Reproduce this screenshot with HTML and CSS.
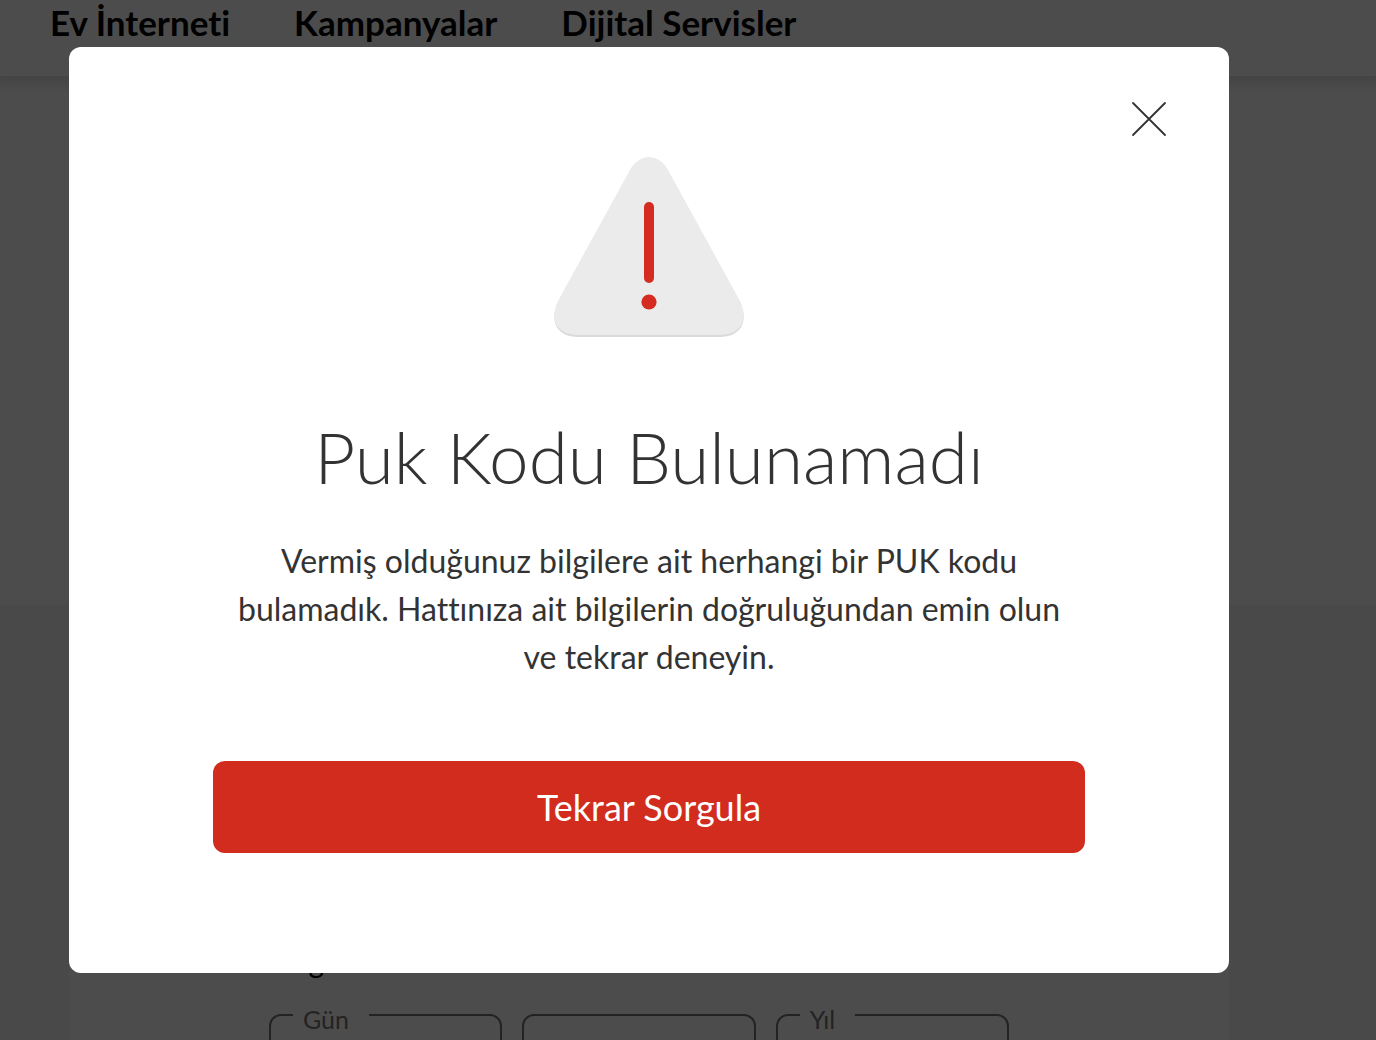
FILE: index.html
```
<!DOCTYPE html>
<html lang="tr">
<head>
    <meta charset="UTF-8">
    <meta name="viewport" content="width=device-width, initial-scale=1.0">
    <title>Puk Kodu Sorgulama</title>
    <link rel="stylesheet" href="styles.css">
</head>
<body>
    <header class="header">
        <nav class="nav">
            <a href="#">Ev İnterneti</a>
            <a href="#">Kampanyalar</a>
            <a href="#">Dijital Servisler</a>
        </nav>
    </header>
    <main class="page">
        <section class="hero"></section>
        <section class="form-area">
            <form class="form-card">
                <h2>Doğum Tarihi</h2>
                <div class="fields">
                    <fieldset class="field">
                        <legend><label for="day">Gün</label></legend>
                        <select id="day"><option></option></select>
                    </fieldset>
                    <fieldset class="field no-legend">
                        <select id="month" aria-label="Ay"><option></option></select>
                    </fieldset>
                    <fieldset class="field">
                        <legend><label for="year">Yıl</label></legend>
                        <select id="year"><option></option></select>
                    </fieldset>
                </div>
            </form>
        </section>
    </main>

    <div class="overlay">
        <div class="modal" role="dialog" aria-modal="true" aria-labelledby="modalTitle">
            <button class="close" type="button" aria-label="Kapat">
                <svg width="36" height="36" viewBox="0 0 36 36" fill="none" stroke="#333" stroke-width="1.8" stroke-linecap="round">
                    <path d="M2 2l32 32M34 2L2 34"/>
                </svg>
            </button>
            <svg class="warning-icon" width="190" height="180" viewBox="0 0 190 180" aria-hidden="true">
                <path fill="#dadada" d="M76 14C85-4 105-4 114 14L186 146C195 164 187 180 166 180H24C3 180-5 164 4 146Z"/>
                <path fill="#ebebeb" d="M76 13C85-4 105-4 114 13L186 144C195 162 187 178 166 178H24C3 178-5 162 4 144Z"/>
                <path stroke="#d42c20" stroke-width="10" stroke-linecap="round" d="M95 50V121"/>
                <circle cx="95" cy="145" r="7.6" fill="#d42c20"/>
            </svg>
            <h1 id="modalTitle">Puk Kodu Bulunamadı</h1>
            <p>Vermiş olduğunuz bilgilere ait herhangi bir PUK kodu bulamadık. Hattınıza ait bilgilerin doğruluğundan emin olun ve tekrar deneyin.</p>
            <button class="retry" type="button">Tekrar Sorgula</button>
        </div>
    </div>
</body>
</html>
```
FILE: styles.css
```
* { box-sizing: border-box; }
body { margin: 0; height: 100vh; overflow: hidden; font-family: Lato, "Noto Sans", sans-serif; font-variant-ligatures: none; color: #333; background: #fff; }
h1, h2, p { margin: 0; }

.header { height: 76px; background: #fff; box-shadow: 0 2px 12px 6px rgba(0,0,0,0.12); }
.nav { display: flex; gap: 64px; padding-left: 50px; }
.nav a { color: #000; font-size: 35px; font-weight: 700; line-height: 44px; text-decoration: none; white-space: nowrap; }

.hero { height: 529px; }
.form-area { background: #f4f4f4; padding: 0 147px 0 69px; }
.form-card { max-width: 1160px; margin: 0 auto; background: #fff; padding: 336px 220px 80px 200px; }
.form-card h2 { color: #000; font-size: 30px; font-weight: 400; line-height: 40px; }
.fields { display: flex; gap: 20px; margin-top: 16px; }
.field { flex: 1; min-width: 0; margin: 0; padding: 0 20px 0 22px; height: 110px; border: 2px solid #777; border-radius: 12px; }
.no-legend { height: auto; margin-top: 17px; }
.field legend { padding: 8px 20px 0 10px; color: #777; font-size: 25px; line-height: 28px; }
.field select { width: 100%; height: 60px; border: none; background: transparent; font: inherit; }

.overlay { position: fixed; inset: 0; padding: 47px 147px 47px 69px; background: rgba(0,0,0,0.7); overflow: hidden; }
.modal { position: relative; display: flex; flex-direction: column; align-items: center; max-width: 1160px; margin: 0 auto; padding: 110px 144px 120px; background: #fff; border-radius: 12px; text-align: center; }
.close { position: absolute; top: 54px; right: 62px; padding: 0; border: none; background: none; cursor: pointer; }
.close svg { display: block; }
.modal h1 { margin-top: 72px; font-size: 71px; font-weight: 300; line-height: 96px; }
.modal p { margin-top: 32px; padding: 0 12px; font-size: 32px; line-height: 48px; }
.retry { width: 100%; height: 92px; margin-top: 80px; border: none; border-radius: 12px; background: #d22c1f; color: #fff; font-family: inherit; font-size: 36px; cursor: pointer; }
.retry:hover { background: #b9241a; }
```
